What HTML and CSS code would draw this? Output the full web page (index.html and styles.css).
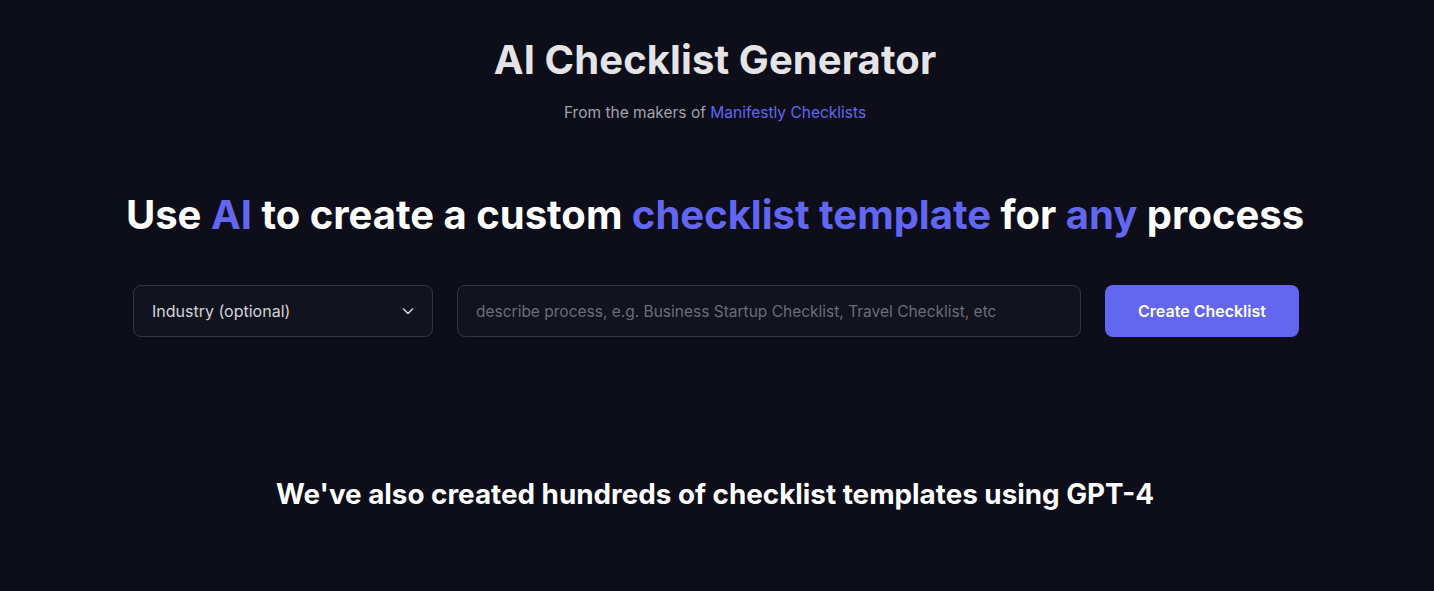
FILE: index.html
```html
<!DOCTYPE html>
<html lang="en">
<head>
<meta charset="utf-8">
<title>AI Checklist Generator</title>
<link rel="stylesheet" href="styles.css">
</head>
<body>
<main class="page">
  <header class="hero">
    <h1 class="title">AI Checklist Generator</h1>
    <p class="subtitle">From the makers of <a class="link" href="#">Manifestly Checklists</a></p>
  </header>
  <section class="generator">
    <h2 class="headline">Use <span class="accent">AI</span> to create a custom <span class="accent">checklist template</span> for <span class="accent">any</span> process</h2>
    <form class="form-row">
      <div class="select">
        <span class="select-label">Industry (optional)</span>
        <svg class="chevron" width="12" height="12" viewBox="0 0 12 12" fill="none"><path d="M1.5 4 6 8.5 10.5 4" stroke="#d1d5db" stroke-width="1.5" stroke-linecap="round" stroke-linejoin="round"/></svg>
      </div>
      <input class="text-input" type="text" placeholder="describe process, e.g. Business Startup Checklist, Travel Checklist, etc">
      <button class="btn" type="button">Create Checklist</button>
    </form>
  </section>
  <section class="more">
    <h3 class="more-title">We've also created hundreds of checklist templates using GPT-4</h3>
  </section>
</main>
</body>
</html>
```
FILE: styles.css
```css
* { box-sizing: border-box; }
html, body { margin: 0; padding: 0; }
body {
  background: #0d0e1a;
  font-family: Inter, "Noto Sans", "Liberation Sans", sans-serif;
  color: #e5e7eb;
  min-height: 591px;
}
.page {
  display: flex;
  flex-direction: column;
  align-items: center;
  padding-top: 36px;
  padding-right: 4px;
}
.hero {
  display: flex;
  flex-direction: column;
  align-items: center;
}
.title {
  margin: 0;
  font-size: 40px;
  line-height: 48px;
  font-weight: 700;
  color: #e4e4e7;
  letter-spacing: 0.1px;
}
.subtitle {
  margin: 19px 0 0;
  font-size: 15.5px;
  line-height: 20px;
  color: #a1a1aa;
}
.link {
  color: #6366f1;
  text-decoration: none;
}
.generator {
  display: flex;
  flex-direction: column;
  align-items: center;
  margin-top: 68px;
}
.headline {
  margin: 0;
  font-size: 40px;
  line-height: 48px;
  font-weight: 700;
  color: #ffffff;
  letter-spacing: 0;
}
.accent { color: #6366f1; }
.form-row {
  display: flex;
  gap: 24px;
  margin: 46px 0 0;
  padding-left: 2px;
}
.select {
  width: 300px;
  height: 52px;
  display: flex;
  align-items: center;
  justify-content: space-between;
  padding: 0 18px 0 18px;
  background: #11131e;
  border: 1px solid #34363f;
  border-radius: 8px;
}
.select-label {
  font-size: 16px;
  color: #d4d4d8;
}
.chevron { display: block; }
.text-input {
  width: 624px;
  height: 52px;
  padding: 0 18px;
  background: #11131e;
  border: 1px solid #34363f;
  border-radius: 8px;
  font-family: inherit;
  font-size: 15.5px;
  color: #e5e7eb;
  outline: none;
}
.text-input::placeholder { color: #6b6e78; }
.btn {
  width: 194px;
  height: 52px;
  border: none;
  border-radius: 8px;
  background: #6366f1;
  color: #ffffff;
  font-family: inherit;
  font-size: 16px;
  font-weight: 600;
}
.more {
  margin-top: 141px;
}
.more-title {
  margin: 0;
  font-size: 27.8px;
  line-height: 32px;
  font-weight: 700;
  color: #ffffff;
}
```
